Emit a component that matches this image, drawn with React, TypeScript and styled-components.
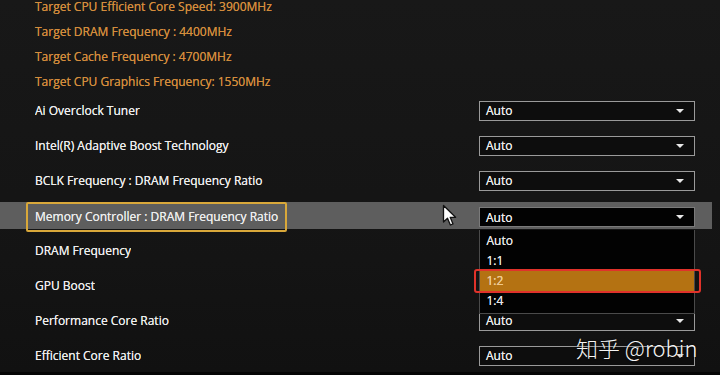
import React from "react";
import styled, { createGlobalStyle } from "styled-components";

const GlobalStyle = createGlobalStyle`
  html, body {
    margin: 0;
    padding: 0;
    background: #151515;
  }
`;

const Screen = styled.div`
  position: relative;
  width: 720px;
  height: 375px;
  overflow: hidden;
  background: linear-gradient(180deg, #181818 0%, #141414 70%, #111 100%);
  font-family: "Open Sans", "Noto Sans", sans-serif;
  border-bottom: 3px solid #050505;
  box-sizing: border-box;
`;

const InfoList = styled.div`
  display: flex;
  flex-direction: column;
  margin-top: -6px;
  padding-left: 35px;
`;

const InfoLine = styled.div`
  height: 25px;
  line-height: 25px;
  font-size: 12px;
  font-weight: 500;
  color: #d48c3c;
  text-shadow: 0 0 0.6px #d48c3c;
`;

const Settings = styled.div`
  display: flex;
  flex-direction: column;
  margin-top: -1px;
`;

const Row = styled.div`
  height: 35px;
  display: flex;
  align-items: center;
  position: relative;
`;

const RowBody = styled.div<{ $active?: boolean }>`
  width: 712px;
  height: 27px;
  display: grid;
  grid-template-columns: 479px 216px;
  align-items: center;
  background: ${(p) => (p.$active ? "#5e5e5e" : "transparent")};
`;

const Label = styled.div<{ $focus?: boolean }>`
  justify-self: start;
  box-sizing: border-box;
  margin-left: ${(p) => (p.$focus ? "26px" : "35px")};
  padding: ${(p) => (p.$focus ? "0 0 0 7px" : "0")};
  width: ${(p) => (p.$focus ? "261px" : "auto")};
  height: ${(p) => (p.$focus ? "30px" : "auto")};
  line-height: 26px;
  border: ${(p) => (p.$focus ? "2px solid #d9a83a" : "none")};
  border-radius: 2px;
  overflow: hidden;
  font-size: 12px;
  font-weight: 500;
  color: #ededed;
  text-shadow: 0 0 0.6px #ededed;
  white-space: nowrap;
`;

const Select = styled.div<{ $open?: boolean }>`
  position: relative;
  height: 20px;
  box-sizing: border-box;
  border: 1.5px solid ${(p) => (p.$open ? "#7a7a7a" : "#9a9a9a")};
  background: ${(p) => (p.$open ? "#020202" : "#0d0d0d")};
  display: flex;
  align-items: center;
  justify-content: space-between;
  padding: 0 10px 0 6px;
  font-size: 12px;
  font-weight: 500;
  color: #ececec;
  text-shadow: 0 0 0.5px #ececec;
`;

const Hidden = styled.div`
  height: 20px;
`;

const Arrow = styled.span`
  width: 0;
  height: 0;
  border-left: 4px solid transparent;
  border-right: 4px solid transparent;
  border-top: 4px solid #e8e8e8;
`;

const Menu = styled.div`
  position: absolute;
  top: calc(100% + 4px);
  left: -1.5px;
  width: 216px;
  box-sizing: border-box;
  background: #020202;
  border: 1px solid #4a4a4a;
  border-top: none;
  z-index: 3;
  padding: 1px 0 2px;
`;

const MenuItem = styled.div<{ $selected?: boolean }>`
  position: relative;
  height: 20px;
  line-height: 20px;
  padding-left: 7px;
  font-size: 12px;
  font-weight: 500;
  color: ${(p) => (p.$selected ? "#f3c98a" : "#e6e6e6")};
  background: ${(p) => (p.$selected ? "#b47212" : "transparent")};
  &::after {
    content: "";
    display: ${(p) => (p.$selected ? "block" : "none")};
    position: absolute;
    left: -6px;
    right: -7px;
    top: -2px;
    bottom: -2px;
    border: 2px solid #e0322a;
    border-radius: 3px;
  }
`;

const Cursor = styled.svg`
  position: absolute;
  left: 442px;
  top: 204px;
  z-index: 4;
`;

const Watermark = styled.div`
  position: absolute;
  left: 576px;
  top: 331px;
  z-index: 5;
  font-family: "Noto Sans CJK SC", "Open Sans", sans-serif;
  font-size: 22px;
  font-weight: 300;
  color: #f4f4f4;
  text-shadow: 0 0 2px rgba(0, 0, 0, 0.6);
  white-space: nowrap;
`;

const infoLines = [
  "Target CPU Efficient Core Speed: 3900MHz",
  "Target DRAM Frequency : 4400MHz",
  "Target Cache Frequency : 4700MHz",
  "Target CPU Graphics Frequency: 1550MHz",
];

const settings = [
  "Ai Overclock Tuner",
  "Intel(R) Adaptive Boost Technology",
  "BCLK Frequency : DRAM Frequency Ratio",
  "Memory Controller : DRAM Frequency Ratio",
  "DRAM Frequency",
  "GPU Boost",
  "Performance Core Ratio",
  "Efficient Core Ratio",
];

const options = ["Auto", "1:1", "1:2", "1:4"];

const App = () => {
  const activeIndex = 3;
  // rows whose dropdowns sit under the open menu
  const covered = [4, 5];
  return (
    <Screen>
      <GlobalStyle />
      <InfoList>
        {infoLines.map((line) => (
          <InfoLine key={line}>{line}</InfoLine>
        ))}
      </InfoList>
      <Settings>
        {settings.map((name, i) => {
          const active = i === activeIndex;
          return (
            <Row key={name}>
              <RowBody $active={active}>
                <Label $focus={active}>{name}</Label>
                {covered.includes(i) ? (
                  <Hidden />
                ) : (
                  <Select $open={active}>
                    <span>Auto</span>
                    <Arrow />
                    {active && (
                      <Menu>
                        {options.map((o) => (
                          <MenuItem key={o} $selected={o === "1:2"}>
                            {o}
                          </MenuItem>
                        ))}
                      </Menu>
                    )}
                  </Select>
                )}
              </RowBody>
            </Row>
          );
        })}
      </Settings>
      <Cursor width="16" height="23" viewBox="0 0 16 23">
        <path
          d="M1.5 1.5 L1.5 18 L5.5 14.2 L8.4 21 L11 19.9 L8.2 13.3 L13.6 13.3 Z"
          fill="#ffffff"
          stroke="#111"
          strokeWidth="1.3"
          strokeLinejoin="round"
        />
      </Cursor>
      <Watermark>知乎 @robin</Watermark>
    </Screen>
  );
};

export default App;
